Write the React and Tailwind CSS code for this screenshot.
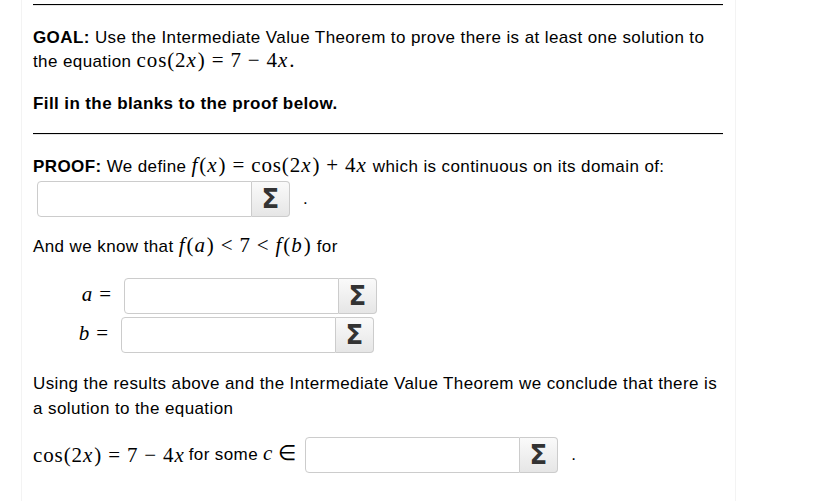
import React from "react";

const sans = { fontFamily: '"Liberation Sans", Arial, sans-serif' };

function M({ children }) {
  // math text in a Times-like face, widened to sit like MathJax output
  return (
    <span
      className="text-[21px] leading-none tracking-[0.9px] whitespace-nowrap"
      style={{ fontFamily: '"Liberation Serif", "Times New Roman", serif' }}
    >
      {children}
    </span>
  );
}

const V = ({ children }) => <i className="pr-[1px]">{children}</i>;
const Op = ({ children }) => <span className="mx-[6px]">{children}</span>;

function MathInput({ className = "" }) {
  return (
    <div className={"flex h-[36px] w-[253px] " + className}>
      <div className="flex-1 rounded-l-[4px] border border-[#cccccc] bg-white" />
      <div className="flex w-[38px] items-center justify-center rounded-r-[4px] border border-l-0 border-[#cccccc] bg-gradient-to-b from-[#fafafa] to-[#e6e6e6]">
        <span
          className="text-[26px] font-extrabold leading-none text-[#333333]"
          style={{ fontFamily: '"DejaVu Sans", sans-serif' }}
        >
          Σ
        </span>
      </div>
    </div>
  );
}

function Rule() {
  return <div className="ml-[11px] mr-[12px] h-[2px] border-t border-black border-b border-b-[#e5e5e5]" />;
}

export default function App() {
  return (
    <div className="h-[501px] w-[819px] bg-white text-[17px] tracking-[0.4px] text-black" style={sans}>
      <div className="ml-[21px] h-full w-[715px] border-x border-[#f3f3f3] pt-[4px]">
        <Rule />

        <div className="pl-[11px]">
          <p className="mt-[20px] leading-[24px]">
            <b>GOAL:</b> Use the Intermediate Value Theorem to prove there is at least one solution to
            <br />
            the equation{" "}
            <M>
              cos(2<V>x</V>)<Op>=</Op>7<Op>−</Op>4<V>x</V>.
            </M>
          </p>

          <p className="mt-[18px] font-bold leading-[24px]">Fill in the blanks to the proof below.</p>
        </div>

        <div className="mt-[17px]">
          <Rule />
        </div>

        <div className="pl-[11px]">
          <p className="mt-[20px] leading-[24px]">
            <b>PROOF:</b> We define{" "}
            <M>
              <V>f</V>(<V>x</V>)<Op>=</Op>cos(2<V>x</V>)<Op>+</Op>4<V>x</V>
            </M>{" "}
            which is continuous on its domain of:
          </p>

          <div className="mt-[2px] flex items-center pl-[4px]">
            <MathInput />
            <span className="ml-[13px]">.</span>
          </div>

          <p className="mt-[18px] leading-[24px]">
            And we know that{" "}
            <M>
              <V>f</V>(<V>a</V>)<Op>&lt;</Op>7<Op>&lt;</Op><V>f</V>(<V>b</V>)
            </M>{" "}
            for
          </p>

          <div className="mt-[19px] flex items-center">
            <div className="w-[91px] pr-[12px] text-right">
              <M>
                <V>a</V>
                <span className="ml-[5px]">=</span>
              </M>
            </div>
            <MathInput />
          </div>
          <div className="mt-[3px] flex items-center">
            <div className="w-[88px] pr-[12px] text-right">
              <M>
                <V>b</V>
                <span className="ml-[5px]">=</span>
              </M>
            </div>
            <MathInput className="h-[35px]" />
          </div>

          <p className="mt-[18px] leading-[25px]">
            Using the results above and the Intermediate Value Theorem we conclude that there is
            <br />a solution to the equation
          </p>

          <div className="mt-[16px] flex items-center">
            <M>
              cos(2<V>x</V>)<Op>=</Op>7<Op>−</Op>4<V>x</V>
            </M>
            <span className="ml-[3px]">for some</span>
            <span className="ml-[5px]">
              <M>
                <V>c</V>
                <span className="ml-[4px]">∈</span>
              </M>
            </span>
            <MathInput className="ml-[8px]" />
            <span className="ml-[13px]">.</span>
          </div>
        </div>
      </div>
    </div>
  );
}
